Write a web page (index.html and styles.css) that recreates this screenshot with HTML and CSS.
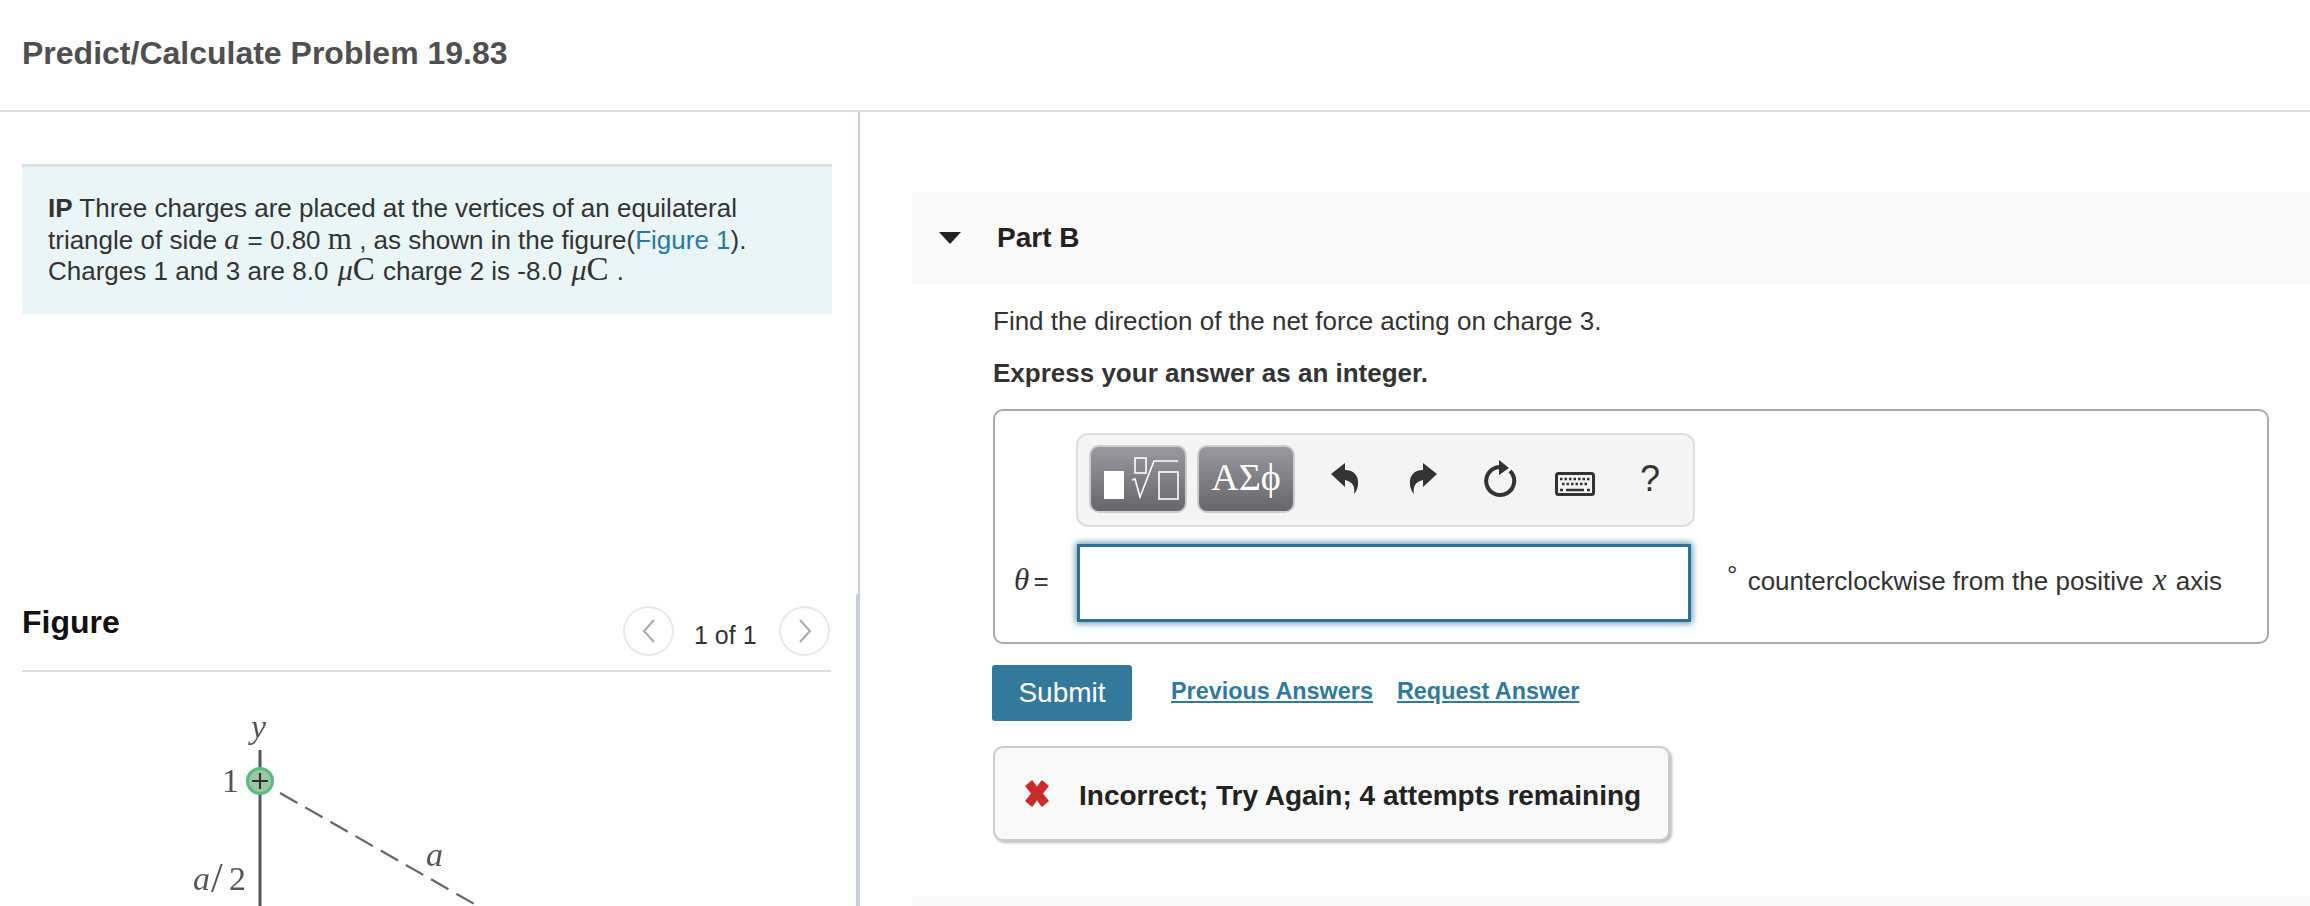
FILE: index.html
```html
<!DOCTYPE html>
<html lang="en">
<head>
<meta charset="utf-8">
<title>Predict/Calculate Problem 19.83</title>
<link rel="stylesheet" href="styles.css">
</head>
<body>
<header class="top"><h1 class="title">Predict/Calculate Problem 19.83</h1></header>
<main class="main">
  <section class="left">
    <div class="intro">
      <p><b>IP</b> Three charges are placed at the vertices of an equilateral triangle of side <i class="m var">a</i> = 0.80 <span class="m unit-m">m</span> , as shown in the figure(<a class="fig-link" href="#">Figure 1</a>). Charges 1 and 3 are 8.0 <i class="m mu">μ</i><span class="m coul">C</span> charge 2 is -8.0 <i class="m mu">μ</i><span class="m coul">C</span> .</p>
    </div>
    <div class="fig-head">
      <h2 class="fig-title">Figure</h2>
      <div class="pager">
        <span class="circle"><svg width="14" height="26" viewBox="0 0 14 26"><path d="M12 2 2 13l10 11" fill="none" stroke="#aaa" stroke-width="2"/></svg></span>
        <span class="count">1 of 1</span>
        <span class="circle"><svg width="14" height="26" viewBox="0 0 14 26"><path d="M2 2l10 11L2 24" fill="none" stroke="#aaa" stroke-width="2"/></svg></span>
      </div>
    </div>
    <svg class="figure" width="809" height="234" viewBox="23 672 809 234">
      <defs><filter id="soft"><feGaussianBlur stdDeviation="0.6"/></filter></defs>
      <g filter="url(#soft)">
        <line x1="260" y1="750" x2="260" y2="906" stroke="#555" stroke-width="3"/>
        <line x1="280" y1="793" x2="476" y2="905" stroke="#666" stroke-width="2.2" stroke-dasharray="20 9"/>
        <circle cx="260" cy="781" r="12.5" fill="#9fc6a4" stroke="#55bb7f" stroke-width="3"/>
        <path d="M252 781h16M260 773v16" stroke="#333" stroke-width="2.2"/>
        <text class="fig-i" x="251" y="738">y</text>
        <text class="fig-n" x="222" y="792">1</text>
        <text class="fig-i" x="193" y="890">a</text>
        <text class="fig-s" x="211" y="892">/</text>
        <text class="fig-n" x="229" y="890">2</text>
        <text class="fig-i" x="426" y="866">a</text>
      </g>
    </svg>
    <span class="scroll"></span>
  </section>
  <section class="right">
    <div class="part-bar">
      <svg class="caret" width="22" height="12" viewBox="0 0 22 12"><path d="M0 0h22L11 12z" fill="#222"/></svg>
      <h3 class="part-title">Part B</h3>
    </div>
    <div class="part-body">
      <p class="q">Find the direction of the net force acting on charge 3.</p>
      <p class="q strong">Express your answer as an integer.</p>
      <div class="answer">
        <div class="toolbar">
          <span class="tbtn">
            <svg width="94" height="64" viewBox="0 0 94 64">
              <rect x="13" y="24" width="20" height="28" fill="#fff"/>
              <g fill="none" stroke="#fff" stroke-width="1.6">
                <rect x="44" y="11" width="11" height="15"/>
                <path d="M41 33l3-1 5 18 14-36h24"/>
                <rect x="68" y="25" width="19" height="27"/>
              </g>
            </svg>
          </span>
          <span class="tbtn greek">ΑΣϕ</span>
          <span class="tools">
            <svg class="undo" width="28" height="32" viewBox="0 0 28 32"><path d="M0 11 14 0v7c9 0 14 6 13 15-.5 4-2 7-4 9 1-6 0-12-9-14v7z" fill="#333"/></svg>
            <svg class="redo" width="28" height="32" viewBox="0 0 28 32"><path d="M28 11 14 0v7C5 7 0 13 1 22c.5 4 2 7 4 9-1-6 0-12 9-14v7z" fill="#333"/></svg>
            <svg class="reset" width="34" height="38" viewBox="0 0 34 38"><path d="M27 11A14 14 0 1 1 16.500 7" fill="none" stroke="#333" stroke-width="4"/><path d="M16 0l10 8-10 7z" fill="#333"/></svg>
            <svg class="keys" width="40" height="24" viewBox="0 0 40 24"><rect x="1.5" y="1.5" width="37" height="21" rx="2" fill="none" stroke="#333" stroke-width="3"/><path d="M5 7h30M7 12h26" stroke="#333" stroke-width="2.500" stroke-dasharray="2.500 2"/><path d="M5 18h3M11 18h18M32 18h3" stroke="#333" stroke-width="2.500"/></svg>
            <span class="help">?</span>
          </span>
        </div>
        <div class="ans-row">
          <span class="lhs"><i class="m">θ</i> =</span>
          <span class="field"></span>
          <span class="unit"><sup class="deg">°</sup> counterclockwise from the positive <i class="m">x</i> axis</span>
        </div>
      </div>
      <div class="actions">
        <button class="submit" type="button">Submit</button>
        <a class="act" href="#">Previous Answers</a>
        <a class="act" href="#">Request Answer</a>
      </div>
      <div class="feedback">
        <svg width="28" height="27" viewBox="0 0 28 27"><path d="M3 6 9 1l5 7 5-7 6 5-6 7.500 6 7.500-6 5-5-7-5 7-6-5 6-7.500z" fill="#c92b2b" stroke="#c92b2b" stroke-linejoin="round" stroke-width="1.500"/></svg>
        <span class="fb-text">Incorrect; Try Again; 4 attempts remaining</span>
      </div>
    </div>
    <div class="next-bar"></div>
  </section>
</main>
</body>
</html>
```
FILE: styles.css
```css
* { box-sizing: border-box; }
html, body { margin: 0; height: 906px; overflow: hidden; background: #fff; }
body { font-family: "Liberation Sans", Arial, sans-serif; font-size: 26px; color: #333; }
p, h1, h2, h3 { margin: 0; }
.top { height: 112px; border-bottom: 2px solid #ddd; padding: 34px 22px 0; }
.title { font-size: 32px; line-height: 38px; font-weight: 700; color: #4f4f4f; }
.main { display: flex; height: 794px; }
.left { position: relative; width: 860px; flex: none; border-right: 2px solid #c5cfdf; padding: 52px 26px 0 22px; }
.scroll { position: absolute; right: -2px; top: 482px; bottom: 0; width: 4px; background: #c5cfdf; }
.intro { width: 810px; height: 150px; background: #e9f5f7; border-top: 3px solid #ddd; padding: 26px 25px 0 26px; line-height: 31.500px; color: #333; }
.m { font-family: "Liberation Serif", serif; line-height: 0; }
.intro .var { font-size: 30px; margin-right: 1px; }
.intro .unit-m { font-size: 31px; }
.intro .mu { font-size: 30px; margin-left: 2px; }
.intro .coul { font-size: 33px; margin-right: 1px; }
.fig-link { color: #2a7a9e; text-decoration: none; }
.fig-head { display: flex; justify-content: space-between; margin-top: 292px; padding-bottom: 14px; border-bottom: 2px solid #ddd; width: 809px; }
.fig-title { font-size: 32px; line-height: 38px; font-weight: 700; color: #111; margin-top: -3px; }
.pager { display: flex; align-items: center; gap: 20px; height: 50px; margin-right: 1px; }
.circle { width: 51px; height: 50px; border: 2px solid #e8e8e8; border-radius: 50%; display: flex; align-items: center; justify-content: center; }
.count { width: 65px; font-size: 25px; line-height: 50px; padding-top: 8px; color: #333; }
.figure { display: block; margin-left: 1px; }
.fig-i { font: italic 34px "Liberation Serif", serif; fill: #555; }
.fig-n { font: 34px "Liberation Serif", serif; fill: #555; }
.fig-s { font: 42px "Liberation Serif", serif; fill: #555; }
.right { flex: 1; min-width: 0; padding-top: 80px; display: flex; flex-direction: column; }
.part-bar { margin-left: 52px; height: 92px; background: #f9f9f9; display: flex; align-items: center; gap: 36px; padding-left: 27px; flex: none; }
.caret { flex: none; }
.part-title { font-size: 28px; font-weight: 700; color: #222; }
.part-body { margin: 0 41px 0 133px; flex: 1; }
.q { line-height: 30px; color: #333; }
.part-body > .q:first-child { margin-top: 22px; }
.strong { font-weight: 700; margin-top: 22px; }
.answer { margin-top: 21px; height: 235px; border: 2px solid #aaa; border-radius: 10px; padding: 22px 0 0 81px; }
.toolbar { width: 619px; height: 94px; background: #f4f4f4; border: 2px solid #ddd; border-radius: 12px; padding: 10px 0 0 11px; display: flex; gap: 10px; }
.tbtn { width: 98px; height: 68px; border: 2px solid #ccc; border-radius: 10px; background: linear-gradient(#9a98a0, #66666a); display: block; flex: none; }
.tbtn svg { display: block; }
.greek { font: 38px/60px "Liberation Serif", serif; color: #fff; text-align: center; }
.tools { display: flex; align-items: center; height: 68px; margin-left: 26px; }
.tools svg { flex: none; }
.redo { margin-left: 50px; }
.reset { margin-left: 46px; }
.keys { margin: 10px 0 0 38px; }
.help { font-size: 36px; color: #333; margin-left: 45px; }
.ans-row { display: flex; align-items: center; margin: 17px 0 0 -81px; }
.lhs { width: 82px; padding: 0 0 3px 19px; font-size: 26px; word-spacing: -3px; }
.lhs .m { font-size: 31px; }
.field { width: 614px; height: 78px; background: #fff; border: 3px solid #2a7296; box-shadow: 0 0 7px 1px rgba(42, 114, 150, .8); flex: none; }
.unit { margin-left: 36px; padding-bottom: 3px; white-space: nowrap; }
.unit .m { font-size: 31px; margin: 0 2px; }
.deg { font-size: 26px; line-height: 0; vertical-align: 6px; margin-right: 3px; }
.actions { display: flex; align-items: flex-start; margin: 21px 0 0 -1px; }
.submit { width: 140px; height: 56px; background: #33799b; color: #fff; border: 0; border-radius: 3px; font: 28px "Liberation Sans", Arial, sans-serif; }
.act { color: #2f7a9e; font-weight: 700; text-decoration: underline; font-size: 23.400px; line-height: 30px; margin: 11px 0 0 24px; }
.submit + .act { margin-left: 39px; }
.feedback { margin-top: 25px; width: 677px; height: 95px; background: #f9f9f9; border: 2px solid #ccc; border-radius: 10px; box-shadow: 2px 2px 3px #bbb; display: flex; align-items: center; gap: 28px; padding-left: 28px; font-size: 28px; font-weight: 700; color: #222; }
.fb-text { padding-top: 4px; }
.next-bar { margin-left: 52px; height: 10px; background: #f9f9f9; flex: none; }
```
